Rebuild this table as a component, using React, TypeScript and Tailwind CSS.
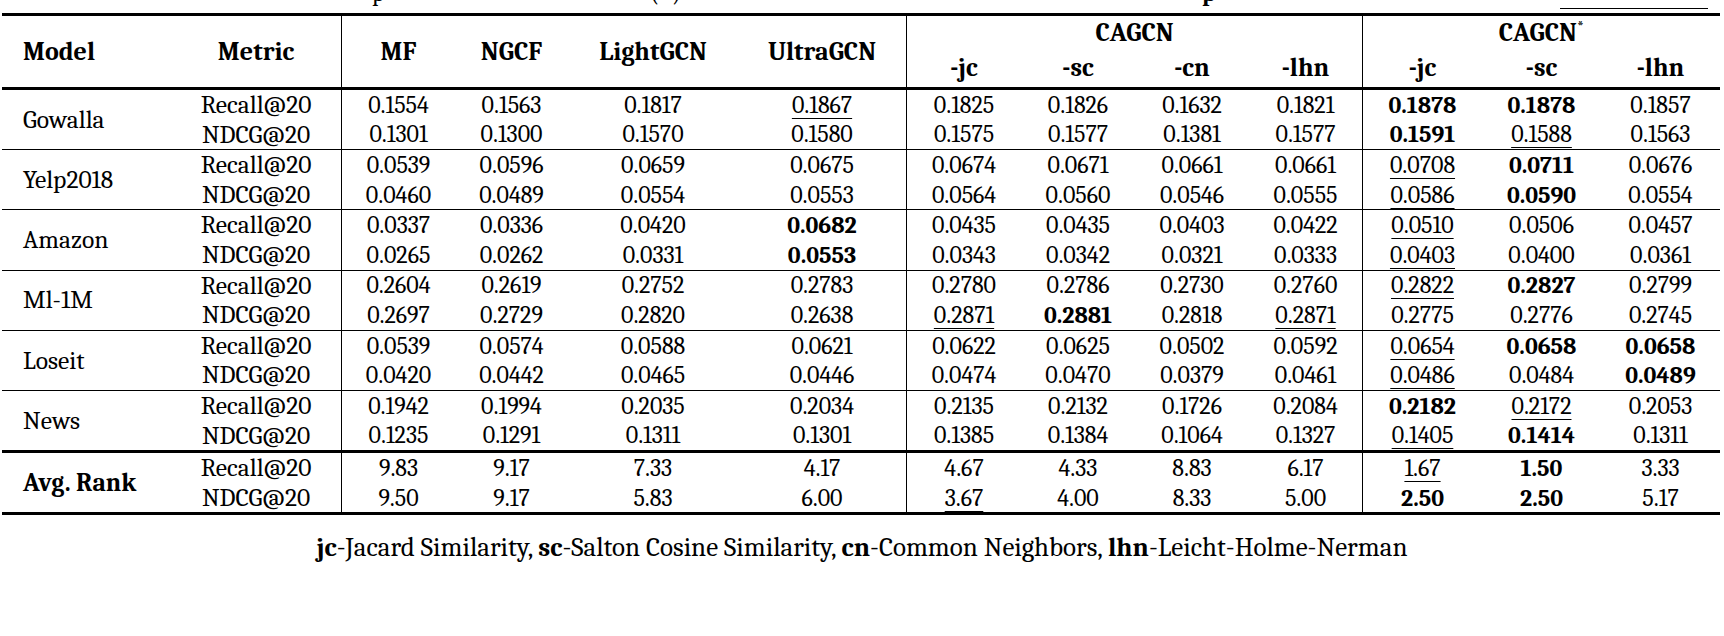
import React from "react";

const baseCls = [
  "w-[114px] border-l border-black",
  "w-[113px]",
  "w-[170px]",
  "w-[168px]",
  "w-[115px] border-l border-black",
  "w-[114px]",
  "w-[114px]",
  "w-[113px]",
  "w-[120px] border-l border-black",
  "w-[119px]",
  "w-[119px]",
];

type Group = { name: string; bold?: boolean; rows: [string, string[]][] };

const groups: Group[] = [
  {
    name: "Gowalla",
    rows: [
      ["Recall@20", ["0.1554", "0.1563", "0.1817", "_0.1867", "0.1825", "0.1826", "0.1632", "0.1821", "*0.1878", "*0.1878", "0.1857"]],
      ["NDCG@20", ["0.1301", "0.1300", "0.1570", "0.1580", "0.1575", "0.1577", "0.1381", "0.1577", "*0.1591", "_0.1588", "0.1563"]],
    ],
  },
  {
    name: "Yelp2018",
    rows: [
      ["Recall@20", ["0.0539", "0.0596", "0.0659", "0.0675", "0.0674", "0.0671", "0.0661", "0.0661", "_0.0708", "*0.0711", "0.0676"]],
      ["NDCG@20", ["0.0460", "0.0489", "0.0554", "0.0553", "0.0564", "0.0560", "0.0546", "0.0555", "_0.0586", "*0.0590", "0.0554"]],
    ],
  },
  {
    name: "Amazon",
    rows: [
      ["Recall@20", ["0.0337", "0.0336", "0.0420", "*0.0682", "0.0435", "0.0435", "0.0403", "0.0422", "_0.0510", "0.0506", "0.0457"]],
      ["NDCG@20", ["0.0265", "0.0262", "0.0331", "*0.0553", "0.0343", "0.0342", "0.0321", "0.0333", "_0.0403", "0.0400", "0.0361"]],
    ],
  },
  {
    name: "Ml-1M",
    rows: [
      ["Recall@20", ["0.2604", "0.2619", "0.2752", "0.2783", "0.2780", "0.2786", "0.2730", "0.2760", "_0.2822", "*0.2827", "0.2799"]],
      ["NDCG@20", ["0.2697", "0.2729", "0.2820", "0.2638", "_0.2871", "*0.2881", "0.2818", "_0.2871", "0.2775", "0.2776", "0.2745"]],
    ],
  },
  {
    name: "Loseit",
    rows: [
      ["Recall@20", ["0.0539", "0.0574", "0.0588", "0.0621", "0.0622", "0.0625", "0.0502", "0.0592", "_0.0654", "*0.0658", "*0.0658"]],
      ["NDCG@20", ["0.0420", "0.0442", "0.0465", "0.0446", "0.0474", "0.0470", "0.0379", "0.0461", "_0.0486", "0.0484", "*0.0489"]],
    ],
  },
  {
    name: "News",
    rows: [
      ["Recall@20", ["0.1942", "0.1994", "0.2035", "0.2034", "0.2135", "0.2132", "0.1726", "0.2084", "*0.2182", "_0.2172", "0.2053"]],
      ["NDCG@20", ["0.1235", "0.1291", "0.1311", "0.1301", "0.1385", "0.1384", "0.1064", "0.1327", "_0.1405", "*0.1414", "0.1311"]],
    ],
  },
];

const avg: Group = {
  name: "Avg. Rank",
  bold: true,
  rows: [
    ["Recall@20", ["9.83", "9.17", "7.33", "4.17", "4.67", "4.33", "8.83", "6.17", "_1.67", "*1.50", "3.33"]],
    ["NDCG@20", ["9.50", "9.17", "5.83", "6.00", "_3.67", "4.00", "8.33", "5.00", "*2.50", "*2.50", "5.17"]],
  ],
};

function Val({ v }: { v: string }) {
  if (v.startsWith("*")) return <span className="font-bold">{v.slice(1)}</span>;
  if (v.startsWith("_"))
    return <span className="underline decoration-1 underline-offset-[5px]">{v.slice(1)}</span>;
  return <span>{v}</span>;
}

function GroupBlock({ g, top }: { g: Group; top: string }) {
  return (
    <div className={`flex ${top}`}>
      <div className={`w-[169px] flex items-center pl-[21px] text-[25.5px] ${g.bold ? "font-bold" : ""}`}>{g.name}</div>
      <div className="flex flex-col">
        {g.rows.map(([m, vals]) => (
          <div key={m} className="flex h-[29.6px]">
            <div className="w-[170px] flex items-center justify-center text-[25.5px]">{m}</div>
            {vals.map((v, i) => (
              <div key={i} className={`${baseCls[i]} flex items-center justify-center`}>
                <Val v={v} />
              </div>
            ))}
          </div>
        ))}
      </div>
    </div>
  );
}

export default function App() {
  return (
    <div className="w-[1724px] h-[636px] bg-white text-black font-serif text-[24px] leading-none overflow-hidden">
      <div className="relative h-[13px] overflow-hidden">
        <span className="absolute left-[372px] top-[-19px]">p</span>
        <span className="absolute left-[650px] top-[-19px]">(</span>
        <span className="absolute left-[672px] top-[-19px]">)</span>
        <span className="absolute left-[1202px] top-[-19px] font-bold">p</span>
        <div className="absolute left-[1560px] top-[8px] w-[148px] h-px bg-black" />
      </div>
      <div className="ml-[2px] w-[1718px]">
        <div className="h-[3px] bg-black" />
        <div className="flex h-[71px] font-bold text-[26px]">
          <div className="w-[169px] flex items-center pl-[21px]">Model</div>
          <div className="w-[170px] flex items-center justify-center">Metric</div>
          <div className="w-[114px] border-l border-black flex items-center justify-center">MF</div>
          <div className="w-[113px] flex items-center justify-center">NGCF</div>
          <div className="w-[170px] flex items-center justify-center">LightGCN</div>
          <div className="w-[168px] flex items-center justify-center">UltraGCN</div>
          <div className="w-[456px] border-l border-black flex flex-col">
            <div className="h-[33px] flex items-center justify-center pt-[1px]">CAGCN</div>
            <div className="flex h-[38px]">
              <div className="w-[114px] flex items-center justify-center">-jc</div>
              <div className="w-[114px] flex items-center justify-center">-sc</div>
              <div className="w-[114px] flex items-center justify-center">-cn</div>
              <div className="w-[113px] flex items-center justify-center">-lhn</div>
            </div>
          </div>
          <div className="w-[358px] border-l border-black flex flex-col">
            <div className="h-[33px] flex items-center justify-center pt-[1px]">
              CAGCN<sup className="text-[16px] relative -top-[6px]">*</sup>
            </div>
            <div className="flex h-[38px]">
              <div className="w-[119px] flex items-center justify-center">-jc</div>
              <div className="w-[119px] flex items-center justify-center">-sc</div>
              <div className="w-[119px] flex items-center justify-center">-lhn</div>
            </div>
          </div>
        </div>
        <div className="h-[3px] bg-black" />
        {groups.map((g, i) => (
          <GroupBlock key={g.name} g={g} top={i === 0 ? "" : "border-t border-black"} />
        ))}
        <div className="h-[3px] bg-black" />
        <GroupBlock g={avg} top="" />
        <div className="h-[3px] bg-black" />
      </div>
      <div className="mt-[19px] text-center text-[27px]">
        <b>jc</b>-Jacard Similarity, <b>sc</b>-Salton Cosine Similarity, <b>cn</b>-Common Neighbors,{" "}
        <b>lhn</b>-Leicht-Holme-Nerman
      </div>
    </div>
  );
}
